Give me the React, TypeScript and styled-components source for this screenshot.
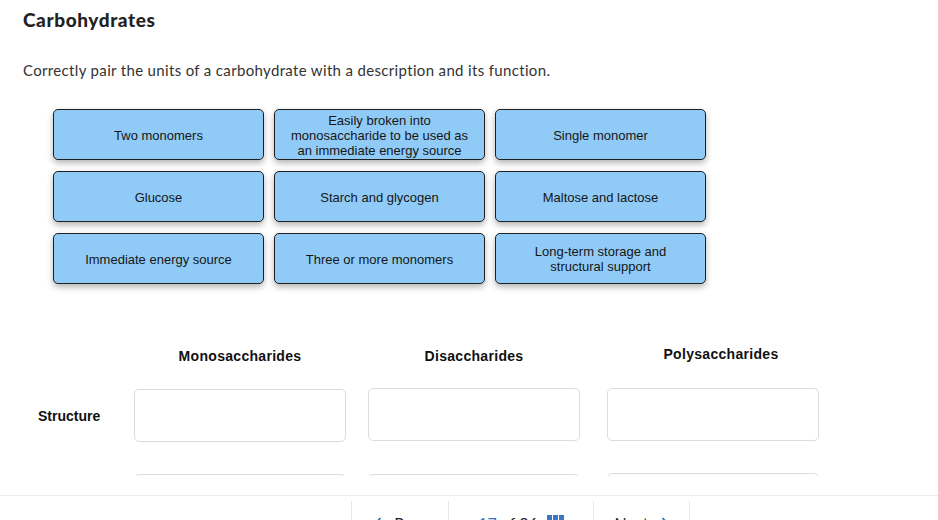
import React from 'react';
import styled, { createGlobalStyle } from 'styled-components';

const GlobalStyle = createGlobalStyle`
  html, body {
    margin: 0;
    padding: 0;
    background: #fff;
    overflow: hidden;
  }
  body {
    font-family: Lato, "Open Sans", sans-serif;
    color: #333;
  }
`;

const Page = styled.div`
  width: 938px;
  height: 520px;
  display: flex;
  flex-direction: column;
  overflow: hidden;
`;

const Main = styled.div`
  height: 476px;
  flex-shrink: 0;
  overflow: hidden;
  padding: 9px 23px 0;
  box-sizing: border-box;
`;

const Title = styled.h1`
  margin: 0;
  font-family: Lato, sans-serif;
  font-size: 19px;
  line-height: 22px;
  font-weight: 900;
  letter-spacing: 0.6px;
  color: #222;
`;

const Prompt = styled.p`
  margin: 29px 0 0;
  font-family: Lato, sans-serif;
  font-size: 15px;
  line-height: 20px;
  letter-spacing: 0.34px;
  color: #333;
`;

const CardGrid = styled.div`
  display: grid;
  grid-template-columns: repeat(3, 211px);
  grid-auto-rows: 51px;
  column-gap: 10px;
  row-gap: 11px;
  margin: 29px 0 0 30px;
`;

const Card = styled.div`
  display: flex;
  align-items: center;
  justify-content: center;
  text-align: center;
  padding: 1px 14px 0;
  box-sizing: border-box;
  background: #90cbf7;
  border: 1px solid #1f1f1f;
  border-radius: 5px;
  box-shadow: 0 3px 6px rgba(0, 0, 0, 0.3);
  font-family: "Liberation Sans", Arial, sans-serif;
  font-size: 13px;
  line-height: 15px;
  color: #161616;
`;

const Table = styled.div`
  display: grid;
  grid-template-columns: 96px 234px 239px 239px;
  margin: 64px 0 0 15px;
`;

const ColHead = styled.div<{ $lift?: number; $shift?: number }>`
  width: 212px;
  text-align: center;
  font-family: "Liberation Sans", Arial, sans-serif;
  font-weight: 700;
  font-size: 14px;
  line-height: 16px;
  letter-spacing: 0.3px;
  color: #111;
  padding-left: ${({ $shift }) => ($shift ?? 0) * 2}px;
  box-sizing: border-box;
  margin-top: ${({ $lift }) => -($lift ?? 0)}px;
  margin-bottom: ${({ $lift }) => 25 + ($lift ?? 0)}px;
`;

const RowLabel = styled.div`
  display: flex;
  align-items: center;
  height: 53px;
  margin-bottom: 32px;
  font-family: "Liberation Sans", Arial, sans-serif;
  font-weight: 700;
  font-size: 14px;
  color: #111;
`;

const DropBox = styled.div<{ $up?: number }>`
  width: 212px;
  height: 53px;
  box-sizing: border-box;
  border: 1px solid #dcdcdc;
  border-radius: 5px;
  margin-top: ${({ $up }) => -($up ?? 0)}px;
  margin-bottom: ${({ $up }) => 32 + ($up ?? 0)}px;
`;

const Footer = styled.footer`
  margin-top: 19px;
  border-top: 1px solid #ececec;
  flex: 1;
  display: flex;
  padding: 5px 0 0 351px;
`;

const NavCell = styled.div<{ $w: number; $last?: boolean }>`
  width: ${({ $w }) => $w}px;
  box-sizing: border-box;
  border-left: 1px solid #e6e6e6;
  border-right: ${({ $last }) => ($last ? '1px solid #e6e6e6' : 'none')};
  display: flex;
  justify-content: center;
  align-items: flex-start;
  gap: 12px;
  padding-top: 12px;
  font-family: Lato, sans-serif;
  font-size: 16px;
  line-height: 20px;
  color: #222;
`;

const Blue = styled.span`
  color: #2f72c4;
`;

const Chevron = ({ dir }: { dir: 'left' | 'right' }) => (
  <svg width="8" height="13" viewBox="0 0 8 13" style={{ marginTop: 4 }}>
    <path
      d={dir === 'left' ? 'M6.5 1 L1.5 6.5 L6.5 12' : 'M1.5 1 L6.5 6.5 L1.5 12'}
      fill="none"
      stroke="#2f72c4"
      strokeWidth="1.8"
    />
  </svg>
);

const GridIcon = () => (
  <svg width="17" height="17" viewBox="0 0 17 17" style={{ marginTop: 2, marginLeft: -3 }}>
    {[0, 6, 12].map((y) =>
      [0, 6, 12].map((x) => <rect key={`${x}-${y}`} x={x} y={y} width="5" height="5" fill="#3b78c2" />)
    )}
  </svg>
);

const cards = [
  'Two monomers',
  'Easily broken into monosaccharide to be used as an immediate energy source',
  'Single monomer',
  'Glucose',
  'Starch and glycogen',
  'Maltose and lactose',
  'Immediate energy source',
  'Three or more monomers',
  'Long-term storage and structural support',
];

export default function App() {
  return (
    <>
      <GlobalStyle />
      <Page>
        <Main>
          <Title>Carbohydrates</Title>
          <Prompt>Correctly pair the units of a carbohydrate with a description and its function.</Prompt>
          <CardGrid>
            {cards.map((c) => (
              <Card key={c}>{c}</Card>
            ))}
          </CardGrid>
          <Table>
            <div />
            <ColHead>Monosaccharides</ColHead>
            <ColHead>Disaccharides</ColHead>
            <ColHead $lift={2} $shift={8}>Polysaccharides</ColHead>

            <RowLabel>Structure</RowLabel>
            <DropBox />
            <DropBox $up={1} />
            <DropBox $up={1} />

            <div />
            <DropBox />
            <DropBox />
            <DropBox $up={1} />
          </Table>
        </Main>
        <Footer>
          <NavCell $w={97}>
            <Chevron dir="left" />
            <span>Prev</span>
          </NavCell>
          <NavCell $w={145}>
            <span>
              <Blue>17</Blue> of 36
            </span>
            <GridIcon />
          </NavCell>
          <NavCell $w={97} $last>
            <span>Next</span>
            <Chevron dir="right" />
          </NavCell>
        </Footer>
      </Page>
    </>
  );
}
